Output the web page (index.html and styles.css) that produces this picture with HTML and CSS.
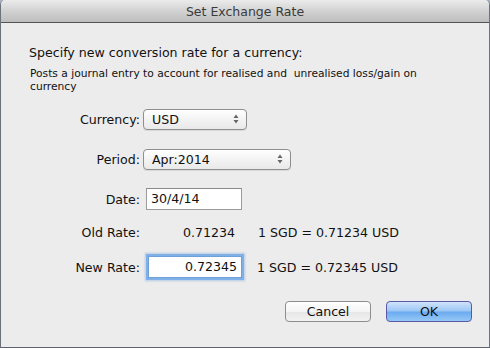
FILE: index.html
```html
<!DOCTYPE html>
<html>
<head>
<meta charset="utf-8">
<link rel="stylesheet" href="styles.css">
</head>
<body>
<div class="window">
  <div class="titlebar">Set Exchange Rate</div>
  <div class="content">
    <div class="heading">Specify new conversion rate for a currency:</div>
    <div class="note">Posts a journal entry to account for realised and&nbsp; unrealised loss/gain on currency</div>
    <div class="form">
      <div class="row r1">
        <div class="label">Currency:</div>
        <div class="popup w-cur"><span>USD</span><span class="arrows"><svg width="6" height="10" viewBox="0 0 6 10"><path d="M3 0.5 L5.5 4 L0.5 4 Z" fill="#666"/><path d="M3 9.5 L5.5 6 L0.5 6 Z" fill="#666"/></svg></span></div>
      </div>
      <div class="row r2">
        <div class="label">Period:</div>
        <div class="popup w-per"><span>Apr:2014</span><span class="arrows"><svg width="6" height="10" viewBox="0 0 6 10"><path d="M3 0.5 L5.5 4 L0.5 4 Z" fill="#666"/><path d="M3 9.5 L5.5 6 L0.5 6 Z" fill="#666"/></svg></span></div>
      </div>
      <div class="row r3">
        <div class="label">Date:</div>
        <div class="field date">30/4/14</div>
      </div>
      <div class="row r4">
        <div class="label">Old Rate:</div>
        <div class="value">0.71234</div>
        <div class="conv">1 SGD = 0.71234 USD</div>
      </div>
      <div class="row r5">
        <div class="label">New Rate:</div>
        <div class="field rate focus">0.72345</div>
        <div class="conv">1 SGD = 0.72345 USD</div>
      </div>
    </div>
    <div class="buttons">
      <div class="btn cancel">Cancel</div>
      <div class="btn ok">OK</div>
    </div>
  </div>
</div>
</body>
</html>
```
FILE: styles.css
```css
html, body {
  margin: 0;
  padding: 0;
  background: #a9b3c4;
}
body {
  width: 490px;
  height: 348px;
  font-family: "DejaVu Sans", "Noto Sans", sans-serif;
  color: #111;
}
.window {
  width: 488px;
  height: 347px;
  border-left: 1px solid #6c717c;
  border-right: 1px solid #6c717c;
  border-bottom: 1px solid #5f636c;
  border-radius: 5px 5px 0 0;
  background: #ececec;
  overflow: hidden;
  display: flex;
  flex-direction: column;
}
.titlebar {
  height: 22px;
  border-bottom: 1px solid #555;
  background: linear-gradient(#ebebeb, #d2d2d2 50%, #bdbdbd);
  text-align: center;
  font-size: 12.5px;
  line-height: 23px;
  color: #3a3a3a;
  flex: none;
}
.content {
  flex: 1;
  display: flex;
  flex-direction: column;
}
.heading {
  margin: 22px 0 0 28px;
  font-size: 12.6px;
  line-height: 16px;
}
.note {
  margin: 7px 0 0 29px;
  width: 430px;
  font-size: 10.7px;
  line-height: 12.5px;
}
.form {
  margin-top: 6px;
  display: flex;
  flex-direction: column;
}
.row {
  display: flex;
  align-items: center;
}
.r1 { height: 40px; }
.r2 { height: 40px; }
.r3 { height: 40px; }
.r4 { height: 26px; }
.r5 { height: 44px; }
.label {
  width: 139px;
  text-align: right;
  font-size: 12.6px;
  margin-right: 3px;
  flex: none;
}
.popup {
  height: 19px;
  border: 1px solid #8e8e8e;
  border-radius: 4px;
  background: linear-gradient(#ffffff, #f3f3f3 50%, #e9e9e9);
  box-shadow: 0 1px 0 rgba(0,0,0,0.08);
  display: flex;
  align-items: center;
  justify-content: space-between;
  padding: 0 7px 0 8px;
  font-size: 12.6px;
  box-sizing: content-box;
}
.w-cur { width: 87px; }
.w-per { width: 131px; }
.arrows {
  display: flex;
  align-items: center;
}
.field {
  height: 20px;
  border: 1px solid #9b9b9b;
  border-top-color: #8a8a8a;
  background: #fff;
  font-size: 12.6px;
  line-height: 20px;
  padding: 0 4px;
  box-sizing: content-box;
}
.date {
  width: 86px;
  margin-left: 3px;
}
.rate {
  width: 84px;
  text-align: right;
  margin-left: 5px;
}
.focus {
  border-color: #6e9fd8;
  box-shadow: 0 0 0 2px #7fb0e8, 0 0 2px 3px rgba(110,160,220,0.45);
}
.value {
  width: 92px;
  text-align: right;
  font-size: 12.6px;
}
.conv {
  font-size: 12.6px;
}
.r4 .conv { margin-left: 23px; }
.r5 .conv { margin-left: 15px; }
.buttons {
  margin-top: 12px;
  display: flex;
  justify-content: flex-end;
  gap: 15px;
  padding-right: 17px;
}
.btn {
  width: 84px;
  height: 19px;
  border-radius: 4px;
  font-size: 12.6px;
  line-height: 19px;
  text-align: center;
  color: #111;
}
.cancel {
  border: 1px solid #8d8d8d;
  background: linear-gradient(#ffffff, #f4f4f4 50%, #e6e6e6 51%, #f2f2f2);
}
.ok {
  border: 1px solid #5b58a8;
  background: linear-gradient(#cfe3fb, #9cc6f6 48%, #6aaaf0 52%, #95c8f7);
}
```
